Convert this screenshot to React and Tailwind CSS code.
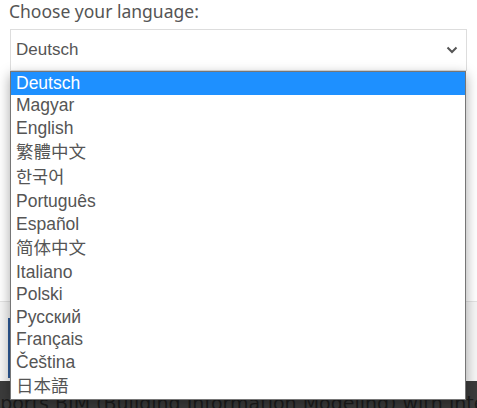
import React from "react";

const languages = [
  { label: "Deutsch" },
  { label: "Magyar" },
  { label: "English" },
  { label: "繁體中文", cjk: true },
  { label: "한국어", cjk: true },
  { label: "Português" },
  { label: "Español" },
  { label: "简体中文", cjk: true },
  { label: "Italiano" },
  { label: "Polski" },
  { label: "Русский" },
  { label: "Français" },
  { label: "Čeština" },
  { label: "日本語", cjk: true },
];

function ChevronDown() {
  return (
    <svg width="12" height="8" viewBox="0 0 12 8" className="text-[#555]">
      <path d="M1.5 1.5 L6 6 L10.5 1.5" fill="none" stroke="currentColor" strokeWidth="2" />
    </svg>
  );
}

export default function App() {
  return (
    <div className="relative w-[477px] h-[408px] overflow-hidden bg-white">
      <p className="pl-[9px] text-[17.5px] leading-[22px] text-[#555] font-['Noto_Sans',sans-serif]">
        Choose your language:
      </p>

      <div className="mx-[10px] mt-[7px] h-[42px] border border-[#ddd] flex items-center justify-between pl-[5px] pr-[8px]">
        <span className="text-[17px] text-[#555] font-['Liberation_Sans',Arial,sans-serif]">Deutsch</span>
        <ChevronDown />
      </div>

      {/* page content behind the open list */}
      <div className="mt-[230px] border-t border-[#e3e3e3] bg-[#f6f6f6] h-[80px] pt-[16px]">
        <div className="ml-[8px] w-[2px] h-[60px] bg-[#2f5c9a]" />
      </div>
      <div className="bg-[#3c3c3c] h-[30px] pt-[13px] overflow-hidden">
        <p className="whitespace-nowrap -ml-[36px] text-[19px] leading-[19px] text-[#1c1c1c] font-['DejaVu_Sans',sans-serif]">
          Supports BIM (Building Information Modeling) with integrated tools
        </p>
      </div>

      {/* open dropdown list */}
      <ul className="absolute left-[10px] top-[71px] w-[456px] border border-[#767676] bg-white shadow-[0_4px_12px_rgba(0,0,0,0.35)] font-['Liberation_Sans','Noto_Sans_CJK_SC',sans-serif] text-[17.5px]">
        {languages.map((lang, i) => (
          <li
            key={lang.label}
            className={
              (lang.cjk ? "h-[25.5px] " : "h-[22.5px] ") +
              "flex items-center pl-[5px] leading-none " +
              (i === 0 ? "bg-[#1e90ff] text-white" : "text-[#555]")
            }
          >
            {lang.label}
          </li>
        ))}
      </ul>
    </div>
  );
}
